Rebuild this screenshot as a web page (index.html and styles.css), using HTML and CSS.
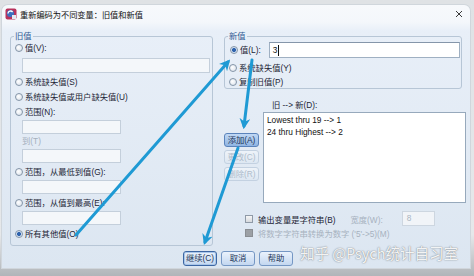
FILE: index.html
```html
<!DOCTYPE html>
<html lang="zh-CN">
<head>
  <meta charset="UTF-8" />
  <meta name="viewport" content="width=device-width, initial-scale=1.0"/>
  <title>重新编码为不同变量：旧值和新值</title>
  <link rel="stylesheet" href="styles.css">
</head>
<body>

  <div class="window">
    <!-- title bar -->
    <div class="titlebar">
      <svg class="app-icon" width="12" height="12" viewBox="0 0 12 12">
        <rect x="0.5" y="0.5" width="11" height="11" rx="2" fill="#b8325c"/>
        <circle cx="5.5" cy="5.5" r="3.6" fill="#3d6fbf"/>
        <path d="M3 5.5 A2.5 2.5 0 0 1 7.6 4.2" stroke="#ffffff" stroke-width="1.3" fill="none"/>
        <rect x="7" y="7" width="4" height="4" fill="#e4e9f2"/>
      </svg>
      <span class="title">重新编码为不同变量：旧值和新值</span>
      <svg class="close" width="8" height="8" viewBox="0 0 8 8">
        <path d="M1 1 L7 7 M7 1 L1 7" stroke="#3a3a3a" stroke-width="1"/>
      </svg>
    </div>

    <div class="content">
      <!-- old value -->
      <fieldset class="group old">
        <legend>旧值</legend>
        <label class="opt"><span class="radio"></span>值(V):</label>
        <div class="field wide"></div>
        <label class="opt"><span class="radio"></span>系统缺失值(S)</label>
        <label class="opt"><span class="radio"></span>系统缺失值或用户缺失值(U)</label>
        <label class="opt"><span class="radio"></span>范围(N):</label>
        <div class="field"></div>
        <div class="sub-label">到(T)</div>
        <div class="field"></div>
        <label class="opt"><span class="radio"></span>范围，从最低到值(G):</label>
        <div class="field"></div>
        <label class="opt"><span class="radio"></span>范围，从值到最高(E):</label>
        <div class="field"></div>
        <label class="opt"><span class="radio on"></span>所有其他值(O)</label>
      </fieldset>

      <div class="right">
        <!-- new value -->
        <fieldset class="group new">
          <legend>新值</legend>
          <div class="value-row">
            <label class="opt"><span class="radio on"></span>值(L):</label>
            <div class="field value">3<span class="caret"></span></div>
          </div>
          <label class="opt gap-l"><span class="radio"></span>系统缺失值(Y)</label>
          <label class="opt gap-s"><span class="radio"></span>复制旧值(P)</label>
        </fieldset>

        <div class="mapping">
          <div class="side">
            <button class="btn hot">添加(A)</button>
            <button class="btn" disabled>更改(C)</button>
            <button class="btn" disabled>删除(R)</button>
          </div>
          <div class="list-box">
            <div class="list-label">旧 --&gt; 新(D):</div>
            <div class="list">
              <div>Lowest thru 19 --&gt; 1</div>
              <div>24 thru Highest --&gt; 2</div>
            </div>
          </div>
        </div>

        <div class="options">
          <div class="check-row">
            <span class="check"></span>输出变量是字符串(B)
            <span class="muted width-label">宽度(W):</span>
            <div class="field small">8</div>
          </div>
          <div class="check-row second muted">
            <span class="check off"></span>将数字字符串转换为数字 ('5'-&gt;5)(M)
          </div>
        </div>
      </div>
    </div>

    <div class="footer">
      <button class="btn default">继续(C)</button>
      <button class="btn">取消</button>
      <button class="btn">帮助</button>
    </div>
  </div>

  <div class="watermark">知乎 @Psych统计自习室</div>

  <!-- annotation arrows -->
  <svg class="arrows" width="474" height="276" viewBox="0 0 474 276">
    <defs>
      <marker id="head" viewBox="0 0 10 10" refX="7" refY="5" markerWidth="3.6" markerHeight="3.6" orient="auto">
        <path d="M0,0 L10,5 L0,10 L3,5 z" fill="#1f9ad4"/>
      </marker>
    </defs>
    <line x1="76" y1="235" x2="228" y2="62" marker-end="url(#head)"/>
    <line x1="252" y1="60" x2="244" y2="126" marker-end="url(#head)"/>
    <line x1="238" y1="148" x2="205" y2="242" marker-end="url(#head)"/>
  </svg>
</body>
</html>
```

FILE: styles.css
```css
* {
  box-sizing: border-box;
}

body {
  margin: 0;
  width: 474px;
  height: 276px;
  overflow: hidden;
  position: relative;
  background: linear-gradient(#dfe2e5, #e6e8ea 85%, #b1b5b9);
  font-family: "Liberation Sans", "Noto Sans CJK SC", sans-serif;
  font-size: 8.3px;
  color: #1c2535;
}

.window {
  margin: 5px 0 0 2px;
  width: 468px;
  height: 263px;
  border-radius: 6px 6px 0 0;
  background: linear-gradient(#f7f9fc 0, #f4f7fb 17px, #e8eff8 26px, #dce6f1 100%);
  box-shadow: 0 0 0 1px #d0d6dc;
}

/* title bar */
.titlebar {
  height: 17px;
  display: flex;
  align-items: center;
  padding-left: 3px;
}

.app-icon {
  flex: none;
}

.title {
  margin-left: 3px;
  font-size: 8.2px;
  color: #111;
}

.close {
  margin-left: auto;
  margin-right: 7px;
}

/* main area */
.content {
  display: grid;
  grid-template-columns: 203px 242px;
  column-gap: 11px;
  padding: 8px 0 0 8px;
  align-items: start;
}

.group {
  margin: 0;
  padding: 0 2px 5px 4px;
  border: 1px solid #b7c6d6;
  border-radius: 3px;
  min-width: 0;
}

.group legend {
  padding: 0 1px;
  margin-left: -1px;
  line-height: 12px;
  color: #335c94;
}

.opt {
  display: flex;
  align-items: center;
  height: 12px;
  line-height: 12px;
  margin-top: 3px;
  white-space: nowrap;
}

legend + .opt {
  margin-top: 0;
}

.radio {
  flex: none;
  width: 8px;
  height: 8px;
  margin-right: 2px;
  border-radius: 50%;
  border: 1px solid #8495a8;
  background: radial-gradient(circle at 40% 40%, #ffffff, #d6dee8);
}

.radio.on {
  background: radial-gradient(circle, #2f63ad 0 1.7px, #cfdff2 2.3px, #eef3f9 100%);
}

.field {
  height: 14px;
  border: 1px solid #c4cfdb;
  background: #f4f7fa;
}

.old .field {
  width: 99px;
  margin: 2px 0 0 7px;
}

.old .field.wide {
  width: 188px;
  height: 15px;
  margin-top: 4px;
}

.sub-label {
  height: 12px;
  line-height: 12px;
  margin: 1px 0 0 7px;
  color: #a5b0bd;
}

/* new value */
.new {
  margin-right: 4px;
  padding: 0 1px 0 4px;
}

.value-row {
  display: flex;
  align-items: center;
  height: 16px;
}

.value-row .opt {
  margin: 0 0 0 1px;
}

.field.value {
  flex: 1;
  height: 16px;
  margin-left: 8px;
  padding-left: 3px;
  display: flex;
  align-items: center;
  background: #fff;
  border-color: #9fb0c2;
  border-top-color: #8596aa;
  color: #111;
}

.caret {
  width: 1px;
  height: 11px;
  margin-left: 1px;
  background: #111;
}

.new .gap-l {
  margin-top: 4px;
}

.new .gap-s {
  margin-top: 2px;
}

/* mapping list */
.mapping {
  display: flex;
  gap: 4px;
  margin-top: 10px;
}

.side {
  display: flex;
  flex-direction: column;
  gap: 3px;
  padding-top: 34px;
}

.side .btn {
  width: 35px;
  height: 14px;
}

.list-box {
  width: 203px;
}

.list-label {
  height: 13px;
  line-height: 12px;
  padding-left: 9px;
}

.list {
  height: 91px;
  padding: 1px 3px;
  background: #fff;
  border: 1px solid #97a9bc;
  color: #111;
}

.list div {
  line-height: 12px;
}

/* string options */
.options {
  margin-top: 8px;
  padding-left: 21px;
}

.check-row {
  display: flex;
  align-items: center;
  height: 15px;
  white-space: nowrap;
}

.check-row.second {
  height: 12px;
  margin-top: 1px;
}

.check {
  flex: none;
  width: 8px;
  height: 8px;
  margin-right: 5px;
  border: 1px solid #8f9aa7;
  background: linear-gradient(#f6f6f6, #d6d9dd);
}

.check.off {
  border-color: #8a8e93;
  background: #9ca0a5;
}

.muted {
  color: #a7b2bf;
}

.width-label {
  margin-left: 15px;
}

.field.small {
  width: 33px;
  height: 15px;
  margin-left: 19px;
  padding-left: 4px;
  line-height: 13px;
  background: #f1f4f8;
  border-color: #cdd6e0;
  color: #a9b4c1;
}

/* buttons */
.btn {
  width: 34px;
  height: 15px;
  padding: 0;
  font: inherit;
  line-height: 13px;
  color: #1d3557;
  border: 1px solid #7597c4;
  border-radius: 3px;
  background: linear-gradient(#eaf2fc, #c3d7f0);
}

.btn.hot {
  border-color: #5a83bb;
  background: linear-gradient(#c0d8f4, #8fb4e2);
}

.btn:disabled {
  color: #aebccb;
  border-color: #c3d1e1;
  background: linear-gradient(#eef3f9, #dde7f2);
}

.btn.default {
  border-color: #3c66a3;
  box-shadow: inset 0 0 0 1px #a9c6e9;
}

.footer {
  display: flex;
  justify-content: center;
  gap: 4px;
  margin-top: 5px;
  padding-left: 4px;
}

/* overlays */
.watermark {
  position: absolute;
  left: 300px;
  top: 244px;
  font-family: "Noto Sans CJK SC", sans-serif;
  font-size: 14.5px;
  line-height: 18px;
  color: rgba(255, 255, 255, 0.92);
  text-shadow: 0 0 1px rgba(60, 60, 60, 0.55), 0 0 2px rgba(0, 0, 0, 0.25);
  white-space: nowrap;
}

.arrows {
  position: absolute;
  left: 0;
  top: 0;
  pointer-events: none;
}

.arrows line {
  stroke: #1f9ad4;
  stroke-width: 3;
  stroke-linecap: round;
}
```
